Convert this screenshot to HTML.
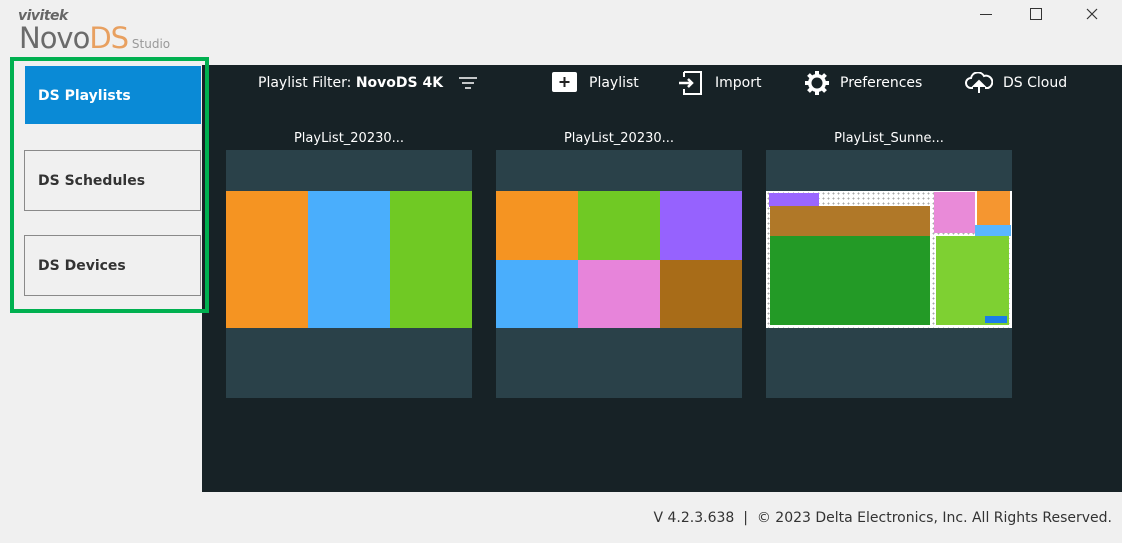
<!DOCTYPE html><html><head><style>
body{margin:0;width:1122px;height:543px;background:#f0f0f0;font-family:"DejaVu Sans","Liberation Sans",sans-serif;position:relative;overflow:hidden}
.a{position:absolute}
.panel{left:202px;top:65px;width:920px;height:427px;background:#172226}
.card{top:150px;width:246px;height:248px;background:#2a4149}
.t{top:131px;width:246px;text-align:center;color:#fff;font-size:13px}
.btn{left:24px;width:177px;height:61px;border:1px solid #8a8a8a;background:#f0f0f0;font-weight:bold;font-size:14px;color:#333;box-sizing:border-box;padding:22px 0 0 13px}
.tb{top:75px;color:#fff;font-size:14px}
</style></head><body>
<div class="a" style="left:18px;top:8px;font-weight:bold;font-size:14px;color:#666;font-style:italic;letter-spacing:-0.5px">vivitek</div>
<div class="a" style="left:19px;top:21px;font-size:29px;color:#6b6b6b;letter-spacing:-1px">Novo<span style="color:#e8a060">DS</span><span style="font-size:12px;color:#999;letter-spacing:0"> Studio</span></div>
<div class="a" style="left:980px;top:14px;width:12px;height:1px;background:#333"></div>
<div class="a" style="left:1030px;top:8px;width:10px;height:10px;border:1px solid #333"></div>
<svg class="a" style="left:1086px;top:8px" width="12" height="12"><path d="M1 1L11 11M11 1L1 11" stroke="#333" stroke-width="1.2"/></svg>
<div class="a panel"></div>
<div class="a tb" style="left:258px">Playlist Filter: <b>NovoDS 4K</b></div>
<svg class="a" style="left:459px;top:76px" width="18" height="14"><path d="M0 2H18M3 7H15M6 12H12" stroke="#fff" stroke-width="1.5"/></svg>
<div class="a" style="left:552px;top:72px;width:25px;height:20px;background:#fff;border-radius:2px"></div>
<svg class="a" style="left:552px;top:72px" width="25" height="20"><path d="M12.5 5V15M7.5 10H17.5" stroke="#222" stroke-width="2"/></svg>
<div class="a tb" style="left:589px">Playlist</div>
<svg class="a" style="left:678px;top:70px" width="26" height="26"><path d="M6 2H23V24H6V19M6 7V2" fill="none" stroke="#fff" stroke-width="2"/><path d="M1 13H14M10 9L14 13L10 17" fill="none" stroke="#fff" stroke-width="2.5"/></svg>
<div class="a tb" style="left:715px">Import</div>
<svg class="a" style="left:804px;top:70px" width="26" height="26" viewBox="0 0 26 26"><g fill="#fff"><circle cx="13" cy="13" r="9"/><g stroke="#fff" stroke-width="4"><path d="M13 1V25M1 13H25M4.5 4.5L21.5 21.5M21.5 4.5L4.5 21.5"/></g></g><circle cx="13" cy="13" r="5.5" fill="#172226"/></svg>
<div class="a tb" style="left:840px">Preferences</div>
<svg class="a" style="left:965px;top:72px" width="28" height="22" viewBox="0 0 28 22"><path d="M8 16H6A5 5 0 0 1 6 6A7 7 0 0 1 19 4A5 5 0 0 1 23 16H20" fill="none" stroke="#fff" stroke-width="2"/><path d="M14 21V11M9 14L14 9L19 14Z" fill="#fff" stroke="#fff" stroke-width="2"/></svg>
<div class="a tb" style="left:1003px">DS Cloud</div>
<div class="a t" style="left:226px">PlayList_20230...</div>
<div class="a t" style="left:496px">PlayList_20230...</div>
<div class="a t" style="left:766px">PlayList_Sunne...</div>
<div class="a card" style="left:226px"></div>
<div class="a card" style="left:496px"></div>
<div class="a card" style="left:766px"></div>
<div class="a" style="left:226px;top:191px;width:82px;height:137px;background:#f59422"></div>
<div class="a" style="left:308px;top:191px;width:82px;height:137px;background:#4aaefc"></div>
<div class="a" style="left:390px;top:191px;width:82px;height:137px;background:#70c924"></div>
<div class="a" style="left:496px;top:191px;width:82px;height:69px;background:#f59422"></div>
<div class="a" style="left:578px;top:191px;width:82px;height:69px;background:#70c924"></div>
<div class="a" style="left:660px;top:191px;width:82px;height:69px;background:#9662fe"></div>
<div class="a" style="left:496px;top:260px;width:82px;height:68px;background:#4aaefc"></div>
<div class="a" style="left:578px;top:260px;width:82px;height:68px;background:#e784da"></div>
<div class="a" style="left:660px;top:260px;width:82px;height:68px;background:#a86c18"></div>
<div class="a" style="left:766px;top:191px;width:246px;height:137px;background:#fff;background-image:radial-gradient(#aaa 0.8px,transparent 1px);background-size:5px 5px"></div>
<div class="a" style="left:769px;top:193px;width:50px;height:14px;background:#9a66ff"></div>
<div class="a" style="left:770px;top:206px;width:160px;height:30px;background:#b07828"></div>
<div class="a" style="left:770px;top:236px;width:160px;height:89px;background:#239a26"></div>
<div class="a" style="left:934px;top:192px;width:41px;height:41px;background:#e98ad8"></div>
<div class="a" style="left:977px;top:191px;width:33px;height:34px;background:#f59630"></div>
<div class="a" style="left:975px;top:225px;width:36px;height:11px;background:#5ab6ff"></div>
<div class="a" style="left:936px;top:236px;width:73px;height:89px;background:#7ed032"></div>
<div class="a" style="left:985px;top:316px;width:22px;height:7px;background:#1a7de8"></div>
<div class="a" style="left:25px;top:66px;width:176px;height:58px;background:#0a8ad6;color:#fff;font-weight:bold;font-size:14px;box-sizing:border-box;padding:22px 0 0 13px">DS Playlists</div>
<div class="a btn" style="top:150px">DS Schedules</div>
<div class="a btn" style="top:235px">DS Devices</div>
<div class="a" style="left:10px;top:57px;width:199px;height:256px;border:4px solid #00b050;box-sizing:border-box"></div>
<div class="a" style="right:10px;top:510px;font-size:14px;color:#333">V 4.2.3.638 &nbsp;|&nbsp; © 2023 Delta Electronics, Inc. All Rights Reserved.</div>
</body></html>
